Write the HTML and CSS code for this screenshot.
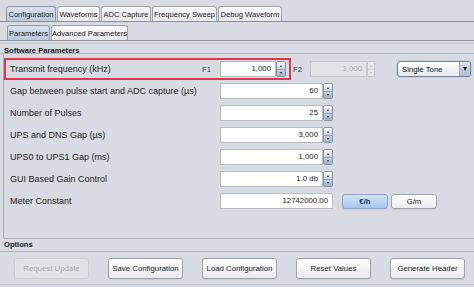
FILE: index.html
```html
<!DOCTYPE html>
<html>
<head>
<meta charset="utf-8">
<link rel="stylesheet" href="styles.css">
</head>
<body>
<div class="app">
  <div class="tabbar">
    <div class="tab sel w-conf">Configuration</div>
    <div class="tab w-wave">Waveforms</div>
    <div class="tab w-adc">ADC Capture</div>
    <div class="tab w-freq">Frequency Sweep</div>
    <div class="tab w-dbg">Debug Waveform</div>
  </div>
  <div class="subbar">
    <div class="tab sel w-par">Parameters</div>
    <div class="tab w-adv">Advanced Parameters</div>
  </div>
  <div class="sec-title first">Software Parameters</div>
  <div class="panel">
    <div class="row r1">
      <div class="hl">
        <span class="label l1">Transmit frequency (kHz)</span>
        <span class="flabel">F1</span>
        <div class="spin">
          <div class="field w56">1,000</div>
          <div class="arrows"><span class="up"></span><span class="dn"></span></div>
        </div>
      </div>
      <span class="flabel f2">F2</span>
      <div class="spin dis">
        <div class="field w57">1,000</div>
        <div class="arrows"><span class="up"></span><span class="dn"></span></div>
      </div>
      <div class="combo">
        <span class="combo-text">Single Tone</span>
        <span class="combo-btn"><span class="tri"></span></span>
      </div>
    </div>
    <div class="row">
      <span class="label">Gap between pulse start and ADC capture (µs)</span>
      <div class="spin"><div class="field w103">60</div><div class="arrows"><span class="up"></span><span class="dn"></span></div></div>
    </div>
    <div class="row">
      <span class="label">Number of Pulses</span>
      <div class="spin"><div class="field w103">25</div><div class="arrows"><span class="up"></span><span class="dn"></span></div></div>
    </div>
    <div class="row">
      <span class="label">UPS and DNS Gap (µs)</span>
      <div class="spin"><div class="field w103">3,000</div><div class="arrows"><span class="up"></span><span class="dn"></span></div></div>
    </div>
    <div class="row">
      <span class="label">UPS0 to UPS1 Gap (ms)</span>
      <div class="spin"><div class="field w103">1,000</div><div class="arrows"><span class="up"></span><span class="dn"></span></div></div>
    </div>
    <div class="row">
      <span class="label">GUI Based Gain Control</span>
      <div class="spin"><div class="field w103">1.0 db</div><div class="arrows"><span class="up"></span><span class="dn"></span></div></div>
    </div>
    <div class="row">
      <span class="label">Meter Constant</span>
      <div class="field solo w113">12742000.00</div>
      <button class="btn unit on">€/h</button>
      <button class="btn unit">G/m</button>
    </div>
  </div>
  <div class="sec-title">Options</div>
  <div class="actions">
    <button class="btn act" disabled>Request Update</button>
    <button class="btn act">Save Configuration</button>
    <button class="btn act">Load Configuration</button>
    <button class="btn act">Reset Values</button>
    <button class="btn act">Generate Header</button>
  </div>
</div>
</body>
</html>
```
FILE: styles.css
```css
* { box-sizing: border-box; }
html, body { margin: 0; padding: 0; }
body {
  width: 474px;
  height: 287px;
  overflow: hidden;
  background: #d8dbe1;
  font-family: "Liberation Sans", Arial, sans-serif;
  color: #1c1c1c;
}
.app { width: 474px; height: 287px; }

.tabbar {
  display: flex;
  height: 22px;
  padding: 6px 0 0 6px;
  border-bottom: 1px solid #8b9099;
}
.subbar {
  display: flex;
  height: 19px;
  padding: 3px 0 0 7px;
  border-bottom: 1px solid #8f949c;
}
.tab {
  height: 100%;
  display: flex;
  align-items: center;
  justify-content: center;
  white-space: nowrap;
  font-size: 7.6px;
  color: #222;
  border: 1px solid #9ea2a9;
  border-bottom: none;
  border-radius: 3px 3px 0 0;
  background: linear-gradient(#fbfbfc, #e6e7ea);
  margin-right: 1px;
}
.tab.sel {
  background: linear-gradient(#d9e3ef, #b9c8da);
  border-color: #8e98a6;
}
.w-conf { width: 50px; }
.w-wave { width: 43px; }
.w-adc { width: 50px; }
.w-freq { width: 65px; }
.w-dbg { width: 64px; }
.w-par { width: 43px; }
.w-adv { width: 77px; }

.sec-title {
  font-size: 7.6px;
  font-weight: bold;
  height: 13px;
  line-height: 12px;
  padding-left: 4px;
  border-bottom: 1px solid #b4b8bf;
}
.sec-title.first {
  margin-top: 2px;
  border-top: 1px solid #c2c5cb;
  padding-top: 1px;
  height: 11px;
}

.panel {
  margin-left: 3px;
  height: 185px;
  border-left: 1px solid #a9adb4;
  border-bottom: 1px solid #b7bbc1;
  padding-top: 4px;
}
.row {
  display: flex;
  align-items: center;
  height: 22px;
  padding-left: 6px;
}
.row.r1 { padding-left: 0; }
.hl {
  display: flex;
  align-items: center;
  height: 22px;
  border: 2px solid #dc3a48;
  padding-left: 4px;
  width: 287px;
}
.label {
  font-size: 9px;
  width: 210px;
  color: #1e1e1e;
  white-space: nowrap;
}
.label.l1 { width: 192px; }
.flabel {
  font-size: 7.6px;
  width: 18px;
  color: #333;
}
.flabel.f2 { margin-left: 2px; width: 17px; }

.spin { display: flex; height: 16px; }
.field {
  height: 16px;
  background: #fff;
  border: 1px solid #b7bbc3;
  font-size: 7.8px;
  text-align: right;
  padding-right: 4px;
  line-height: 14px;
  color: #222;
}
.w56 { width: 56px; }
.w57 { width: 57px; }
.w103 { width: 103px; }
.w113 { width: 113px; }
.arrows {
  width: 10px;
  height: 16px;
  display: flex;
  flex-direction: column;
  border: 1px solid #8a94a3;
  border-radius: 2px;
  overflow: hidden;
}
.arrows span {
  flex: 1;
  position: relative;
  background: linear-gradient(#fbfcfd, #c9d4e2);
}
.arrows .dn {
  border-top: 1px solid #9aa3b0;
  background: linear-gradient(#c2cfe0, #9fb3cc);
}
.arrows span::after {
  content: "";
  position: absolute;
  left: 2.5px;
  top: 2.5px;
  border-left: 1.5px solid transparent;
  border-right: 1.5px solid transparent;
}
.arrows .up::after { border-bottom: 2px solid #333; }
.arrows .dn::after { border-top: 2px solid #222; top: 2px; }
.spin.dis .field { background: #e1e3e7; color: #a9acb1; border-color: #c6c9ce; }
.spin.dis .arrows { width: 8px; border-color: #c3c7cd; }
.spin.dis .arrows span { background: #e6e8eb; }
.spin.dis .arrows .dn { border-top-color: #d0d3d7; }
.spin.dis .arrows span::after { left: 1.5px; }
.spin.dis .arrows .up::after { border-bottom-color: #b5b8bd; }
.spin.dis .arrows .dn::after { border-top-color: #b5b8bd; }

.combo {
  margin-left: 22px;
  width: 74px;
  height: 16px;
  display: flex;
  align-items: center;
  border: 1px solid #78849a;
  border-radius: 3px;
  background: linear-gradient(#fdfdfe, #e6e9ee);
  box-shadow: 0 0 0 1px #c7cfdc;
  overflow: hidden;
}
.combo-text { flex: 1; font-size: 7.8px; padding-left: 4px; color: #111; }
.combo-btn {
  width: 11px;
  height: 100%;
  border-left: 1px solid #9aa6b8;
  background: linear-gradient(#d6e2f0, #a9bdd6);
  position: relative;
}
.tri {
  position: absolute;
  left: 2.5px;
  top: 5px;
  border-left: 2.5px solid transparent;
  border-right: 2.5px solid transparent;
  border-top: 4px solid #1a1a1a;
}

.btn {
  font-family: "Liberation Sans", Arial, sans-serif;
  font-size: 7.8px;
  color: #1e1e1e;
  border: 1px solid #9fa3aa;
  border-radius: 3px;
  background: linear-gradient(#fefefe, #e9eaed);
  padding: 0;
  box-shadow: 0 1px 0 #c9ccd1;
}
.unit { width: 46px; height: 15px; margin-left: 3px; }
.unit.on {
  margin-left: 9px;
  background: linear-gradient(#cfe2f9, #a7c7ee);
  border-color: #8aa6cc;
  font-weight: bold;
  color: #23344d;
}
.field.solo { width: 113px; }

.actions {
  display: flex;
  padding: 6px 0 0 14px;
  gap: 19px;
  height: 33px;
  border-bottom: 1px solid #c1c4ca;
}
.act { width: 75px; height: 21px; }
.act:disabled {
  color: #a7aab0;
  background: #e0e2e6;
  border-color: #cdd0d5;
  box-shadow: none;
}
```
